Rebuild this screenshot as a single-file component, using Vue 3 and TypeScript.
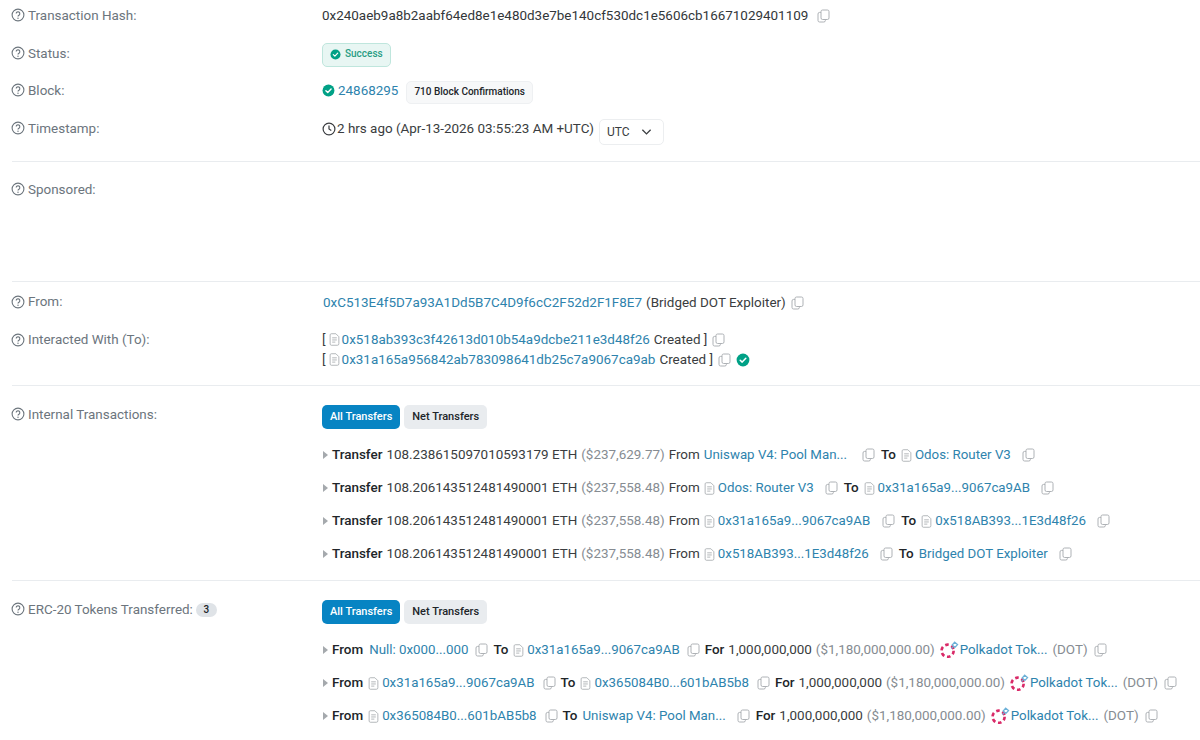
<script setup lang="ts">
type Seg = { k: 'b' | 't' | 'm' | 'l' | 'doc' | 'copy' | 'dot'; v?: string; after?: number }

const b = (v: string, after = 4): Seg => ({ k: 'b', v, after })
const t = (v: string, after = 4): Seg => ({ k: 't', v, after })
const m = (v: string, after = 4): Seg => ({ k: 'm', v, after })
const l = (v: string, after = 0): Seg => ({ k: 'l', v, after })
const doc = (): Seg => ({ k: 'doc', after: 3 })
const copy = (after = 6): Seg => ({ k: 'copy', after })
const dot = (): Seg => ({ k: 'dot', after: 1 })

const transfers: Seg[][] = [
  [b('Transfer'), t('108.238615097010593179 ETH'), m('($237,629.77)'), t('From', 4), l('Uniswap V4: Pool Man...', 15), copy(6), b('To', 5), doc(), l('Odos: Router V3', 11), copy()],
  [b('Transfer'), t('108.206143512481490001 ETH'), m('($237,558.48)'), t('From', 4), doc(), l('Odos: Router V3', 11), copy(6), b('To', 5), doc(), l('0x31a165a9...9067ca9AB', 11), copy()],
  [b('Transfer'), t('108.206143512481490001 ETH'), m('($237,558.48)'), t('From', 4), doc(), l('0x31a165a9...9067ca9AB', 12), copy(6), b('To', 5), doc(), l('0x518AB393...1E3d48f26', 11), copy()],
  [b('Transfer'), t('108.206143512481490001 ETH'), m('($237,558.48)'), t('From', 4), doc(), l('0x518AB393...1E3d48f26', 11), copy(6), b('To', 5), l('Bridged DOT Exploiter', 11), copy()],
]

const tokens: Seg[][] = [
  [b('From', 6), l('Null: 0x000...000', 7), copy(5), b('To', 5), doc(), l('0x31a165a9...9067ca9AB', 7), copy(5), b('For'), t('1,000,000,000'), m('($1,180,000,000.00)', 5), dot(), l('Polkadot Tok...', 5), m('(DOT)', 6), copy()],
  [b('From', 5), doc(), l('0x31a165a9...9067ca9AB', 8), copy(5), b('To', 5), doc(), l('0x365084B0...601bAB5b8', 8), copy(5), b('For'), t('1,000,000,000'), m('($1,180,000,000.00)', 5), dot(), l('Polkadot Tok...', 5), m('(DOT)', 6), copy()],
  [b('From', 5), doc(), l('0x365084B0...601bAB5b8', 8), copy(5), b('To', 5), l('Uniswap V4: Pool Man...', 11), copy(6), b('For'), t('1,000,000,000'), m('($1,180,000,000.00)', 5), dot(), l('Polkadot Tok...', 5), m('(DOT)', 6), copy()],
]

const groups = [
  { label: 'Internal Transactions:', count: '', rows: transfers },
  { label: 'ERC-20 Tokens Transferred:', count: '3', rows: tokens },
]
</script>

<template>
  <main class="page">
    <svg width="0" height="0" class="defs" aria-hidden="true">
      <defs>
        <symbol id="i-help" viewBox="0 0 14 14">
          <circle cx="7" cy="7" r="5.9" fill="none" stroke="currentColor" stroke-width="1.1" />
          <path d="M5.2 5.6a1.8 1.8 0 1 1 2.7 1.6c-.6.35-.9.7-.9 1.3" fill="none" stroke="currentColor" stroke-width="1.1" />
          <circle cx="7" cy="10.2" r=".7" fill="currentColor" />
        </symbol>
        <symbol id="i-copy" viewBox="0 0 13 14">
          <rect x="4" y="1" width="8" height="9.5" rx="1.6" fill="none" stroke="currentColor" stroke-width="1" />
          <path d="M4 3.4H2.6A1.6 1.6 0 0 0 1 5v6.4A1.6 1.6 0 0 0 2.6 13h4.2a1.6 1.6 0 0 0 1.6-1.6v-.9" fill="none" stroke="currentColor" stroke-width="1" />
        </symbol>
        <symbol id="i-doc" viewBox="0 0 11 14">
          <path d="M2 .8h5l3.2 3.2v7.6a1.6 1.6 0 0 1-1.6 1.6H2A1.4 1.4 0 0 1 .8 11.8V2A1.3 1.3 0 0 1 2 .8Z" fill="none" stroke="currentColor" stroke-width="1" />
          <path d="M3 5.2h5M3 7.5h5M3 9.8h3.4" stroke="currentColor" stroke-width="1" fill="none" />
        </symbol>
        <symbol id="i-check" viewBox="0 0 14 14">
          <circle cx="7" cy="7" r="6.4" fill="#00a186" />
          <path d="M4.2 7.2l2 1.9 3.6-3.8" fill="none" stroke="#fff" stroke-width="1.5" stroke-linecap="round" stroke-linejoin="round" />
        </symbol>
      </defs>
    </svg>

    <section class="section first">
      <div class="row">
        <div class="label"><svg class="help"><use href="#i-help" /></svg>Transaction Hash:</div>
        <div class="value pad">
          <span class="hash">0x240aeb9a8b2aabf64ed8e1e480d3e7be140cf530dc1e5606cb16671029401109</span>
          <svg class="copy hash-copy"><use href="#i-copy" /></svg>
        </div>
      </div>
      <div class="row">
        <div class="label"><svg class="help"><use href="#i-help" /></svg>Status:</div>
        <div class="value">
          <span class="badge"><svg class="check-sm"><use href="#i-check" /></svg>Success</span>
        </div>
      </div>
      <div class="row">
        <div class="label"><svg class="help"><use href="#i-help" /></svg>Block:</div>
        <div class="value pad">
          <svg class="check"><use href="#i-check" /></svg>
          <a class="link">24868295</a>
          <span class="pill">710 Block Confirmations</span>
        </div>
      </div>
      <div class="row">
        <div class="label"><svg class="help"><use href="#i-help" /></svg>Timestamp:</div>
        <div class="value pad">
          <svg class="clock" viewBox="0 0 14 14">
            <circle cx="7" cy="7" r="5.9" fill="none" stroke="currentColor" stroke-width="1.2" />
            <path d="M7 3.6V7l2.3 1.5" fill="none" stroke="currentColor" stroke-width="1.2" />
          </svg>
          <span class="stamp">2 hrs ago (Apr-13-2026 03:55:23 AM +UTC)</span>
          <span class="select">UTC
            <svg class="chev" viewBox="0 0 12 8"><path d="M1.5 1.5 6 6l4.5-4.5" fill="none" stroke="currentColor" stroke-width="1.4" /></svg>
          </span>
        </div>
      </div>
    </section>

    <section class="section sponsored">
      <div class="label"><svg class="help"><use href="#i-help" /></svg>Sponsored:</div>
    </section>

    <section class="section parties">
      <div class="row">
        <div class="label"><svg class="help"><use href="#i-help" /></svg>From:</div>
        <div class="value pad">
          <a class="link from-link">0xC513E4f5D7a93A1Dd5B7C4D9f6cC2F52d2F1F8E7</a>
          <span class="after-link">(Bridged DOT Exploiter)</span>
          <svg class="copy from-copy"><use href="#i-copy" /></svg>
        </div>
      </div>
      <div class="row tall">
        <div class="label"><svg class="help"><use href="#i-help" /></svg>Interacted With (To):</div>
        <div class="stack">
          <div class="line">
            <span>[</span><svg class="doc"><use href="#i-doc" /></svg>
            <a class="link">0x518ab393c3f42613d010b54a9dcbe211e3d48f26</a>
            <span>Created ]</span>
            <svg class="copy"><use href="#i-copy" /></svg>
          </div>
          <div class="line">
            <span>[</span><svg class="doc"><use href="#i-doc" /></svg>
            <a class="link">0x31a165a956842ab783098641db25c7a9067ca9ab</a>
            <span>Created ]</span>
            <svg class="copy"><use href="#i-copy" /></svg>
            <svg class="check verified"><use href="#i-check" /></svg>
          </div>
        </div>
      </div>
    </section>

    <section v-for="g in groups" :key="g.label" class="section group">
      <div class="label">
        <svg class="help"><use href="#i-help" /></svg>{{ g.label }}
        <span v-if="g.count" class="count">{{ g.count }}</span>
      </div>
      <div class="group-body">
        <div class="tabs">
          <button class="tab active">All Transfers</button>
          <button class="tab">Net Transfers</button>
        </div>
        <div v-for="(row, i) in g.rows" :key="i" class="tx">
          <span class="caret"></span>
          <template v-for="(s, j) in row" :key="j">
            <svg v-if="s.k === 'doc'" class="doc" :style="{ marginRight: s.after + 'px' }"><use href="#i-doc" /></svg>
            <svg v-else-if="s.k === 'copy'" class="copy" :style="{ marginRight: s.after + 'px' }"><use href="#i-copy" /></svg>
            <svg v-else-if="s.k === 'dot'" class="dot" viewBox="0 0 20 18" :style="{ marginRight: s.after + 'px' }">
              <circle cx="8" cy="10.3" r="6.4" fill="none" stroke="#d92a68" stroke-width="2.8" stroke-dasharray="3.8 2.9" />
              <path d="M15.5 1.2l3 2.6-2.8 3-2.8-2.6Z" fill="none" stroke="#6cb1d8" stroke-width="1.4" />
              <path d="M12 8l2-2" stroke="#6cb1d8" stroke-width="1.2" />
            </svg>
            <a v-else-if="s.k === 'l'" class="link" :style="{ marginRight: s.after + 'px' }">{{ s.v }}</a>
            <span v-else :class="s.k === 'b' ? 'strong' : s.k === 'm' ? 'muted' : ''" :style="{ marginRight: s.after + 'px' }">{{ s.v }}</span>
          </template>
        </div>
      </div>
    </section>
  </main>
</template>

<style scoped>
.page {
  width: 1200px;
  height: 740px;
  overflow: hidden;
  background: #fff;
  font-family: Roboto, "Liberation Sans", sans-serif;
  font-size: 13.45px;
  line-height: 20px;
  color: #3a3d40;
  box-sizing: border-box;
}
.defs { position: absolute; }
.section {
  margin-left: 12px;
  border-bottom: 1px solid #e9ecef;
  box-sizing: border-box;
}
.first { height: 162px; padding-top: 5px; }
.sponsored { height: 120px; padding-top: 17px; }
.parties { height: 104px; padding-top: 10px; }
.group { display: grid; grid-template-columns: 310px 1fr; padding-top: 19px; }
.group:nth-of-type(4) { height: 195px; }
.group:nth-of-type(5) { border-bottom: 0; }
.row { display: grid; grid-template-columns: 310px 1fr; height: 37.5px; }
.label {
  display: flex;
  align-items: center;
  height: 20px;
  margin-left: -1px;
  color: #6c757d;
  white-space: nowrap;
}
.first .label, .sponsored .label { height: 22px; }
.help { width: 14px; height: 14px; margin-right: 3px; color: #6c757d; flex: none; }
.first .help, .sponsored .help, .group .help { margin-top: -2px; }
.value { display: flex; align-items: flex-start; white-space: nowrap; }
.pad { padding-top: 1px; }
.hash { color: #33373a; }
.copy { width: 13px; height: 14px; color: #aeb2b6; flex: none; }
.hash-copy { margin: 3px 0 0 9px; }
.from-copy { margin-top: 3px; }
.badge {
  display: inline-flex;
  align-items: center;
  height: 24px;
  padding: 0 7px 1px;
  border: 1px solid #bfe6dd;
  border-radius: 5px;
  background: #e8f6f3;
  color: #2a9d84;
  font-size: 10px;
  font-weight: 500;
  box-sizing: border-box;
}
.check-sm { width: 11px; height: 11px; margin-right: 4px; }
.check { width: 13px; height: 13px; margin: 3px 3px 0 0; flex: none; }
.link { color: #2e83ad; white-space: nowrap; }
.tx .link { font-size: 13.3px; }
.from-link { margin-left: 1px; }
.pill {
  display: inline-flex;
  align-items: center;
  height: 23px;
  margin: 0 0 0 8px;
  padding: 0 7px 1px;
  border: 1px solid #eef0f2;
  border-radius: 5px;
  background: #f7f8f9;
  color: #212529;
  font-size: 10px;
  font-weight: 500;
  box-sizing: border-box;
}
.clock { width: 14px; height: 14px; margin: 3px 1px 0 0; color: #3a3d40; flex: none; }
.select {
  display: inline-flex;
  align-items: center;
  height: 26px;
  width: 65px;
  margin: 0 0 0 5px;
  padding-left: 7px;
  border: 1px solid #eceef0;
  border-radius: 5px;
  font-size: 12px;
  box-sizing: border-box;
}
.chev { width: 11px; height: 8px; margin-left: 11px; }
.tall { height: auto; }
.after-link { margin: 0 5px 0 4px; }
.stack { display: flex; flex-direction: column; }
.line { display: flex; align-items: center; height: 20px; white-space: nowrap; }
.line .doc { margin: 0 2px 0 3px; }
.line .link { margin-right: 4px; }
.line .copy { margin-left: 5px; }
.doc { width: 11px; height: 13px; color: #aeb2b6; flex: none; }
.line .verified { width: 14px; height: 14px; margin: 0 0 0 5px; }
.count {
  display: inline-flex;
  align-items: center;
  justify-content: center;
  width: 21px;
  height: 14px;
  margin-left: 3px;
  border-radius: 7px;
  background: #dfe3e7;
  color: #212529;
  font-size: 10px;
  font-weight: 500;
}
.tabs { display: flex; gap: 4px; height: 25px; margin: 0 0 15px; }
.tab {
  height: 24px;
  padding: 0 8px;
  border: 0;
  border-radius: 5px;
  background: #e9ecef;
  color: #212529;
  font: 500 11px/24px Roboto, "Liberation Sans", sans-serif;
}
.tab.active { background: #0784c3; color: #fff; }
.tx {
  display: flex;
  align-items: center;
  height: 20px;
  margin-bottom: 13px;
  white-space: nowrap;
}
.caret {
  width: 0;
  height: 0;
  margin: 0 4px 0 1px;
  border-left: 5px solid #a5a9ad;
  border-top: 4px solid transparent;
  border-bottom: 4px solid transparent;
}
.strong { font-weight: 500; color: #212529; }
.muted { color: #868c92; }
.dot { width: 19px; height: 17px; flex: none; margin-top: -2px; }
</style>

<style>
html, body { margin: 0; background: #fff; }
</style>
